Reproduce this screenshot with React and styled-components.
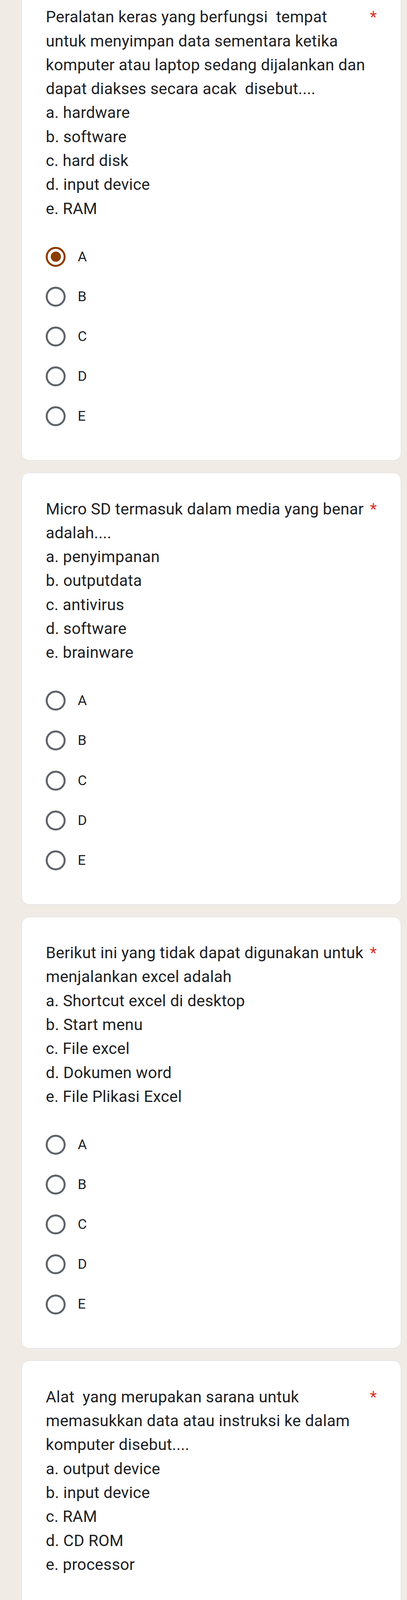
import styled, { createGlobalStyle } from "styled-components";

const GlobalStyle = createGlobalStyle`
  html, body {
    margin: 0;
    padding: 0;
    background: #f1ebe6;
  }
  * {
    box-sizing: border-box;
  }
`;

const questions = [
  {
    id: 1,
    title:
      "Peralatan keras yang berfungsi  tempat untuk menyimpan data sementara ketika komputer atau laptop sedang dijalankan dan dapat diakses secara acak  disebut....\na. hardware\nb. software\nc. hard disk\nd. input device\ne. RAM",
    selected: "A",
  },
  {
    id: 2,
    title:
      "Micro SD termasuk dalam media yang benar adalah....\na. penyimpanan\nb. outputdata\nc. antivirus\nd. software\ne. brainware",
  },
  {
    id: 3,
    title:
      "Berikut ini yang tidak dapat digunakan untuk menjalankan excel adalah\na. Shortcut excel di desktop\nb. Start menu\nc. File excel\nd. Dokumen word\ne. File Plikasi Excel",
  },
  {
    id: 4,
    title:
      "Alat  yang merupakan sarana untuk memasukkan data atau instruksi ke dalam komputer disebut....\na. output device\nb. input device\nc. RAM\nd. CD ROM\ne. processor",
    extraGap: 40,
  },
  {
    id: 5,
    title:
      "Salah satu program aplikasi yang dapat digunakan untuk mengelola dan menjaga keamanan atau program dari kerusakan adalah....\na. scandisk\nb. microsoft excel\nc. diskspace\nd. accessories\ne. microsoft word",
  },
  {
    id: 6,
    title:
      "Untuk menyisipkan gambar dalam Ms. Word dilakukan di menu\na. Insert\nb. View\nc. Format\nd. Data\ne. Save",
    topTrim: 15.6,
  },
];

const choices = ["A", "B", "C", "D", "E"];

// the screenshot is a scrolled form: the page is clipped to the window
const Frame = styled.div`
  height: 100vh;
  overflow: hidden;
`;

const Page = styled.main`
  display: flex;
  flex-direction: column;
  gap: 31px;
  margin-top: -49px;
  padding: 0 15px 0 55px;
  font-family: Roboto, "Noto Sans", Arial, sans-serif;
`;

const Card = styled.section`
  background: #ffffff;
  border: 1px solid #dadce0;
  border-radius: 20px;
  padding: ${({ $topTrim }) => 61.3 - ($topTrim || 0)}px 61.3px 61.3px;
`;

const Header = styled.div`
  display: flex;
  align-items: flex-start;
  margin-bottom: ${({ $extraGap }) => 41 + ($extraGap || 0)}px;
`;

const Title = styled.div`
  flex: 1;
  min-width: 0;
  font-size: 40.9px;
  line-height: 61.3px;
  letter-spacing: 0.26px;
  color: #202124;
  white-space: pre-wrap;
  word-wrap: break-word;
`;

const Required = styled.span`
  color: #d93025;
  font-size: 40.9px;
  line-height: 61.3px;
  padding-left: 0.25em;
`;

const OptionList = styled.div`
  display: flex;
  flex-direction: column;
`;

const OptionRow = styled.label`
  display: flex;
  align-items: center;
  height: 102.2px;
  cursor: pointer;
`;

const Radio = styled.span`
  flex: none;
  width: 51px;
  height: 51px;
  border-radius: 50%;
  border: 5.1px solid ${({ $checked }) => ($checked ? "#8b3d02" : "#5f6368")};
  display: flex;
  align-items: center;
  justify-content: center;
`;

const Dot = styled.span`
  width: 25.5px;
  height: 25.5px;
  border-radius: 50%;
  background: #8b3d02;
`;

const OptionLabel = styled.span`
  margin-left: 30.7px;
  font-size: 35.8px;
  line-height: 51.1px;
  letter-spacing: 0.51px;
  color: #202124;
`;

const Question = ({ title, selected, extraGap, topTrim }) => (
  <Card $topTrim={topTrim}>
    <Header $extraGap={extraGap}>
      <Title>{title}</Title>
      <Required>*</Required>
    </Header>
    <OptionList>
      {choices.map((c) => (
        <OptionRow key={c}>
          <Radio $checked={selected === c}>{selected === c && <Dot />}</Radio>
          <OptionLabel>{c}</OptionLabel>
        </OptionRow>
      ))}
    </OptionList>
  </Card>
);

const App = () => (
  <>
    <GlobalStyle />
    <Frame>
      <Page>
        {questions.map((q) => (
          <Question key={q.id} {...q} />
        ))}
      </Page>
    </Frame>
  </>
);

export default App;
